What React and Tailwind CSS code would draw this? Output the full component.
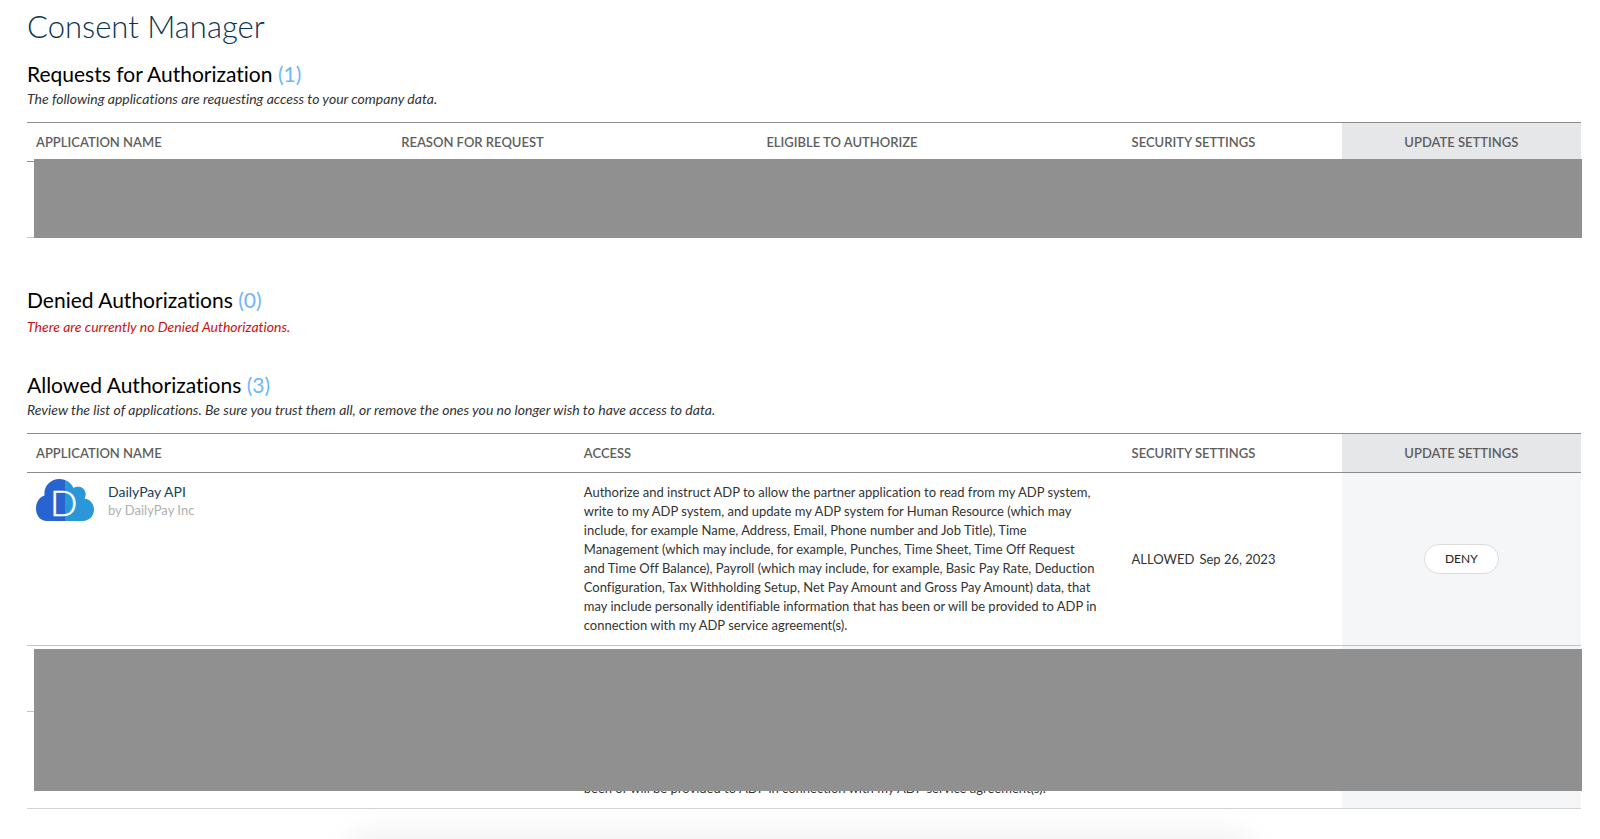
const ACCESS_TEXT =
  "Authorize and instruct ADP to allow the partner application to read from my ADP system, write to my ADP system, and update my ADP system for Human Resource (which may include, for example Name, Address, Email, Phone number and Job Title), Time Management (which may include, for example, Punches, Time Sheet, Time Off Request and\u00a0Time Off Balance), Payroll (which may include, for example, Basic Pay Rate, Deduction Configuration, Tax Withholding Setup, Net Pay Amount and Gross Pay Amount) data, that may include personally identifiable information that has been or will be provided to ADP in connection with my ADP service agreement(s).";

function DailyPayLogo() {
  return (
    <svg className="h-[42px] w-[58px] shrink-0 overflow-visible" viewBox="0 0 58 42" aria-hidden="true">
      <defs>
        <clipPath id="cloud">
          <path d="M11 42C4.500 42 0 36.500 0 29.500C0 23 3.500 18 8.500 16.500C7.500 7 14.500 0 23.500 0C30 0 35 3.500 37.500 9C39 8 41 7.500 43 7.800C47.500 8.300 50.500 12.500 49.500 17C49.300 18 49 18.800 48.500 19.500C54 20 58 25 58 30.500C58 37 53 42 47 42Z" />
        </clipPath>
      </defs>
      <g clipPath="url(#cloud)">
        <rect width="29" height="42" fill="#2764d0" />
        <rect x="29" width="29" height="42" fill="#2a98d8" />
      </g>
      <text x="14" y="37" fontSize="36" fill="#fff" stroke="#fff" strokeWidth="0.5" className="font-[Lato] font-light">D</text>
    </svg>
  );
}

function SectionTitle({ children, count }) {
  return (
    <h2 className="text-[21px] leading-6 text-black">
      {children} <span className="text-[#6eb7fb]">({count})</span>
    </h2>
  );
}

function Th({ children, className = "text-left" }) {
  return (
    <th scope="col" className={`h-[39px] border-y border-[#8c8c8c] px-[9px] py-0 text-[13px] leading-5 font-semibold text-[#5e5e5e] ${className}`}>
      {children}
    </th>
  );
}

export default function App() {
  return (
    <main className="relative min-h-screen overflow-hidden bg-white pt-[6px] pr-[19px] pb-2 pl-[27px] font-[Lato,sans-serif] text-[13px] leading-[19px] text-[#333] [font-variant-ligatures:none]">
      <h1 className="text-[31px] leading-10 font-light text-[#0b3550]">Consent Manager</h1>

      <section className="mt-4">
        <SectionTitle count={1}>Requests for Authorization</SectionTitle>
        <p className="mt-[3px] text-[14px] italic">The following applications are requesting access to your company data.</p>
        <div className="relative mt-[14px]">
          <table className="w-full table-fixed border-collapse">
            <colgroup>
              <col className="w-[23.5%]" />
              <col className="w-[23.5%]" />
              <col className="w-[23.5%]" />
              <col className="w-[14.1%]" />
              <col className="w-[15.4%]" />
            </colgroup>
            <thead>
              <tr>
                <Th>APPLICATION NAME</Th>
                <Th>REASON FOR REQUEST</Th>
                <Th>ELIGIBLE TO AUTHORIZE</Th>
                <Th>SECURITY SETTINGS</Th>
                <Th className="bg-[#e6e7e9] text-center">UPDATE SETTINGS</Th>
              </tr>
            </thead>
            <tbody>
              <tr>
                <td colSpan={4} className="h-[76px] border-b border-[#c4c4c4]" />
                <td className="border-b border-[#c4c4c4] bg-[#f5f6f8]" />
              </tr>
            </tbody>
          </table>
          <div className="absolute top-[37px] -right-px bottom-0 left-[7px] bg-[#909090]" />
        </div>
      </section>

      <section className="mt-[50px]">
        <SectionTitle count={0}>Denied Authorizations</SectionTitle>
        <p className="mt-[5px] text-[14px] text-[#cc1111] italic">There are currently no Denied Authorizations.</p>
      </section>

      <section className="mt-[37px]">
        <SectionTitle count={3}>Allowed Authorizations</SectionTitle>
        <p className="mt-[3px] text-[14px] italic">
          Review the list of applications. Be sure you trust them all, or remove the ones you no longer wish to have access to data.
        </p>
        <div className="relative mt-[14px]">
          <table className="w-full table-fixed border-collapse">
            <colgroup>
              <col className="w-[35.25%]" />
              <col className="w-[35.25%]" />
              <col className="w-[14.1%]" />
              <col className="w-[15.4%]" />
            </colgroup>
            <thead>
              <tr>
                <Th>APPLICATION NAME</Th>
                <Th>ACCESS</Th>
                <Th>SECURITY SETTINGS</Th>
                <Th className="bg-[#e6e7e9] text-center">UPDATE SETTINGS</Th>
              </tr>
            </thead>
            <tbody>
              <tr className="border-b border-[#c4c4c4]">
                <td className="px-[9px] pt-[6px] align-top">
                  <div className="flex gap-[14px]">
                    <DailyPayLogo />
                    <div className="pt-[3px]">
                      <a href="#dailypay" className="block text-[14px] text-[#14405a]">DailyPay API</a>
                      <div className="text-[#b0b0b0]">by DailyPay Inc</div>
                    </div>
                  </div>
                </td>
                <td className="px-[9px] py-[10px]">
                  <p className="max-w-[520px]">{ACCESS_TEXT}</p>
                </td>
                <td className="px-[9px]">
                  <div className="flex gap-[5px]">
                    <span>ALLOWED</span>
                    <span>Sep 26, 2023</span>
                  </div>
                </td>
                <td className="bg-[#f5f6f8] text-center">
                  <button type="button" className="rounded-full border border-[#dcdcdc] bg-white px-5 py-1 text-[12px] leading-5 text-[#222]">
                    DENY
                  </button>
                </td>
              </tr>
              <tr className="border-b border-[#c4c4c4]">
                <td colSpan={3} className="h-[66px]" />
                <td className="bg-[#f5f6f8]" />
              </tr>
              <tr className="border-b border-[#d4d4d4]">
                <td className="h-[97px]" />
                <td className="px-[9px] pb-[10px] align-bottom whitespace-nowrap">
                  been or will be provided to ADP in connection with my ADP service agreement(s).
                </td>
                <td />
                <td className="bg-[#f5f6f8]" />
              </tr>
            </tbody>
          </table>
          <div className="absolute -right-px bottom-[18px] left-[7px] h-[142px] bg-[#909090]" />
        </div>
      </section>

      <div className="pointer-events-none absolute inset-x-[22%] top-full h-10 shadow-[0_0_36px_rgba(0,0,0,0.09)]" />
    </main>
  );
}
